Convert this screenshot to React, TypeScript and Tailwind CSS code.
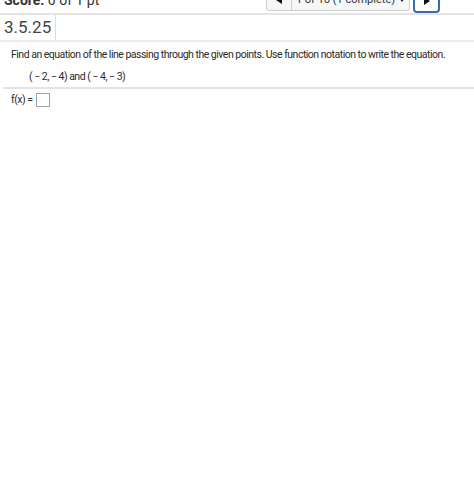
import React from 'react';

const App: React.FC = () => {
  return (
    <div className="w-[474px] h-[485px] bg-white overflow-hidden text-[#333]" style={{ fontFamily: 'Roboto, "Liberation Sans", sans-serif' }}>
      {/* header, partly scrolled out of view */}
      <div className="-mt-[13px] h-[28px] flex items-center border-b-2 border-[#e4e4e4]">
        <div className="pl-[4px] text-[14px] leading-none">
          <span className="font-bold">Score:</span> 0 of 1 pt
        </div>
        <div className="ml-auto mr-[34px] flex items-end h-full">
          <div className="flex h-[22px] mb-[2px] border border-[#cfcfcf] rounded-b-[3px] bg-[#f7f7f7]">
            <button className="w-[25px] flex items-center justify-center border-r border-[#cfcfcf]">
              <svg width="6" height="8" viewBox="0 0 6 8"><path d="M6 0 L0 4 L6 8 Z" fill="#111" /></svg>
            </button>
            <div className="w-[117px] flex items-center justify-center text-[11px] gap-[4px]">
              1 of 16 (1 complete)
              <svg width="6" height="4" viewBox="0 0 6 4"><path d="M0 0 L6 0 L3 4 Z" fill="#222" /></svg>
            </div>
          </div>
          <button className="ml-[3px] w-[27px] h-[24px] flex items-center justify-center border-2 border-[#3b6ea8] rounded-b-[4px] bg-white">
            <svg width="6" height="8" viewBox="0 0 6 8"><path d="M0 0 L6 4 L0 8 Z" fill="#111" /></svg>
          </button>
        </div>
      </div>

      <div className="flex h-[27px] border-b-2 border-[#ececec]">
        <div className="pl-[4px] pr-[4px] flex items-center text-[17px] text-[#444] border-r border-[#dcdcdc]">3.5.25</div>
      </div>

      <div className="pt-[6px] text-[10.5px] tracking-[-0.5px] text-[#2a2a2a] whitespace-nowrap">
        <div className="pl-[11px] h-[14px] leading-[14px]">
          Find an equation of the line passing through the given points. Use function notation to write the equation.
        </div>
        <div className="pl-[29px] mt-[8px] h-[14px] leading-[14px]">( − 2, − 4) and ( − 4, − 3)</div>
        <div className="ml-[3px] mt-[3px] border-b-2 border-[#e4e4e4]" />
        <div className="pl-[11px] mt-[4px] flex items-center gap-[4px] h-[14px]">
          <span>f(x) =</span>
          <span className="inline-block w-[14px] h-[14px] border border-[#9aa3ad] bg-white" />
        </div>
      </div>
    </div>
  );
};

export default App;
